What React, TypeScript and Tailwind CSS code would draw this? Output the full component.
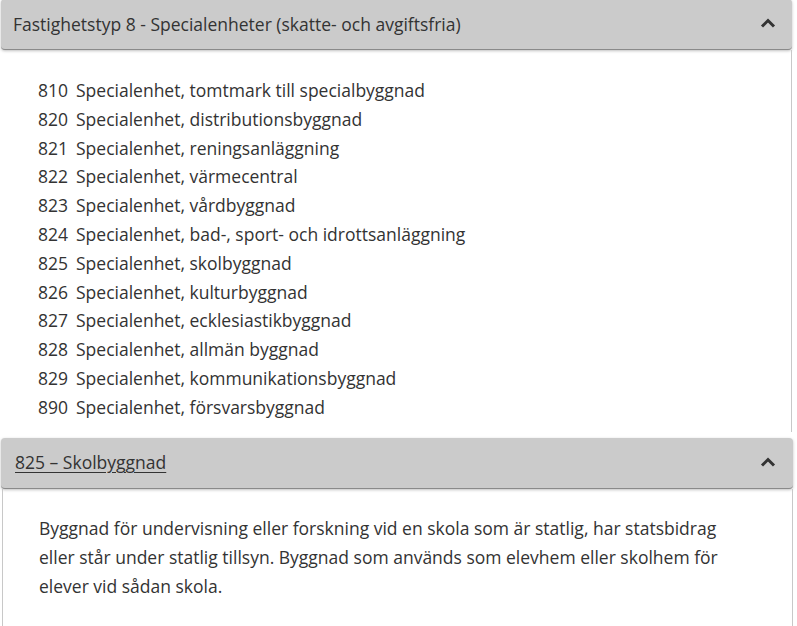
const items: [string, string][] = [
  ["810", "Specialenhet, tomtmark till specialbyggnad"],
  ["820", "Specialenhet, distributionsbyggnad"],
  ["821", "Specialenhet, reningsanläggning"],
  ["822", "Specialenhet, värmecentral"],
  ["823", "Specialenhet, vårdbyggnad"],
  ["824", "Specialenhet, bad-, sport- och idrottsanläggning"],
  ["825", "Specialenhet, skolbyggnad"],
  ["826", "Specialenhet, kulturbyggnad"],
  ["827", "Specialenhet, ecklesiastikbyggnad"],
  ["828", "Specialenhet, allmän byggnad"],
  ["829", "Specialenhet, kommunikationsbyggnad"],
  ["890", "Specialenhet, försvarsbyggnad"],
];

const Chevron = () => (
  <svg width="16" height="10" viewBox="0 0 16 10" fill="none" stroke="#333" strokeWidth="3">
    <path d="M2 8.5 8 2.5l6 6" />
  </svg>
);

export default function App() {
  return (
    <div
      className="w-[797px] h-[626px] overflow-hidden bg-white text-[#333]"
      style={{ fontFamily: '"Open Sans", sans-serif' }}
    >
      <div className="w-[791px] ml-px">
        {/* Fastighetstyp 8 */}
        <div className="flex items-center justify-between h-[51px] -mt-px px-3 bg-[#cbcbcb] rounded-[4px] border-b border-[#8a8a8a] shadow-[0_1px_3px_rgba(0,0,0,0.25)]">
          <span className="text-[17.5px]">Fastighetstyp 8 - Specialenheter (skatte- och avgiftsfria)</span>
          <span className="mr-[4px] mt-[-2px]">
            <Chevron />
          </span>
        </div>
        <div className="border-r border-[#c8c8c8] pt-[26px] pb-[10px] pl-[37px]">
          {items.map(([code, text]) => (
            <div key={code} className="flex text-[17.5px] leading-[28.8px]">
              <span className="w-[38px]">{code}</span>
              <span>{text}</span>
            </div>
          ))}
        </div>
      </div>

      {/* 825 – Skolbyggnad */}
      <div className="w-[792px] ml-px mt-[6px]">
        <div className="flex items-center justify-between h-[51px] px-[14px] bg-[#cbcbcb] rounded-[4px] border-b border-[#8a8a8a] shadow-[0_1px_3px_rgba(0,0,0,0.25)]">
          <span className="text-[17.5px] underline underline-offset-[3px]">825 – Skolbyggnad</span>
          <span className="mr-[3px] mt-[-2px]">
            <Chevron />
          </span>
        </div>
        <div className="border-x border-[#c8c8c8] ml-px pt-[25px] pb-[40px] pl-[36px] pr-[40px]">
          <p className="text-[17.5px] leading-[29px]">
            Byggnad för undervisning eller forskning vid en skola som är statlig, har statsbidrag
            eller står under statlig tillsyn. Byggnad som används som elevhem eller skolhem för
            elever vid sådan skola.
          </p>
        </div>
      </div>
    </div>
  );
}
